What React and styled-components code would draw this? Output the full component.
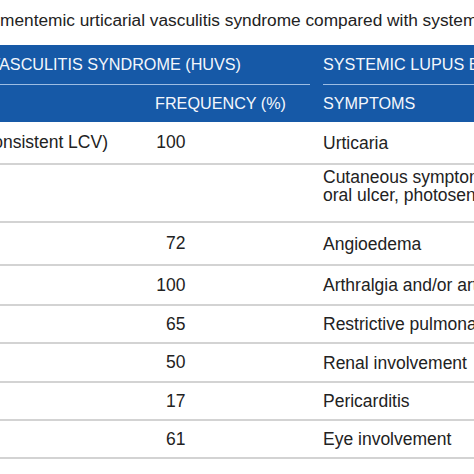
import React from "react";
import styled, { createGlobalStyle } from "styled-components";

const Global = createGlobalStyle`
  html, body { margin: 0; padding: 0; background: #ffffff; }
  body { font-family: "Liberation Sans", Arial, Helvetica, sans-serif; }
`;

const Page = styled.div`
  width: 474px;
  height: 474px;
  overflow: hidden;
  background: #ffffff;
  color: #222222;
`;

const Title = styled.div`
  height: 45px;
  box-sizing: border-box;
  padding-top: 9px;
  margin-left: -96px;
  font-size: 17.3px;
  line-height: 22px;
  white-space: nowrap;
  color: #222222;
`;

const Table = styled.div`
  display: grid;
  grid-template-columns: 145px 165px 1fr;
  width: 474px;
`;

const HeadBand = styled.div`
  grid-column: 1 / -1;
  display: grid;
  grid-template-columns: subgrid;
  grid-template-rows: 40px 37px;
  background: #1659a7;
  color: #f4f7fc;
  font-size: 16.2px;
  white-space: nowrap;
`;

const GroupHead = styled.div`
  grid-column: ${(p) => p.$cols};
  display: flex;
  align-items: center;
  justify-content: ${(p) => (p.$clipLeft ? "flex-end" : "flex-start")};
  padding-right: ${(p) => p.$padRight || 0}px;
  margin-left: ${(p) => p.$inset || 0}px;
  border-bottom: 1.5px solid #9dbde3;
  overflow: visible;
`;

const SubHead = styled.div`
  grid-column: ${(p) => p.$col};
  display: flex;
  align-items: center;
  padding-left: ${(p) => p.$padLeft || 0}px;
`;

const Row = styled.div`
  grid-column: 1 / -1;
  display: grid;
  grid-template-columns: subgrid;
  height: ${(p) => p.$h}px;
  box-sizing: border-box;
  border-bottom: 2px solid #d3d3d3;
  font-size: 17.5px;
  white-space: nowrap;
`;

const SymptomA = styled.div`
  display: flex;
  align-items: center;
  justify-content: flex-end;
  padding-right: 37px;
`;

const FreqCell = styled.div`
  display: flex;
  align-items: center;
  padding-left: 11px;
`;

const Num = styled.span`
  display: inline-block;
  width: 29.5px;
  text-align: right;
`;

const SymptomC = styled.div`
  display: flex;
  flex-direction: column;
  justify-content: ${(p) => (p.$top ? "flex-start" : "center")};
  padding-left: 13px;
  padding-top: ${(p) => p.$padTop || 0}px;
  line-height: ${(p) => (p.$multi ? "18px" : "20px")};
  overflow: visible;
`;

const rows = [
  { h: 43, a: "Urticarial lesions (histologically consistent LCV)", f: "100", c: ["Urticaria"] },
  { h: 58, a: "", f: "", c: ["Cutaneous symptoms (malar rash, discoid rash,", "oral ulcer, photosensitivity)"], multi: true },
  { h: 43, a: "", f: "72", c: ["Angioedema"] },
  { h: 40, a: "", f: "100", c: ["Arthralgia and/or arthritis"] },
  { h: 38, a: "", f: "65", c: ["Restrictive pulmonary disease"] },
  { h: 39, a: "", f: "50", c: ["Renal involvement"] },
  { h: 38, a: "", f: "17", c: ["Pericarditis"] },
  { h: 38, a: "", f: "61", c: ["Eye involvement"] },
];

export default function App() {
  return (
    <>
      <Global />
      <Page>
        <Title>
          Hypocomplementemic urticarial vasculitis syndrome compared with systemic lupus erythematosus
        </Title>
        <Table>
          <HeadBand>
            <GroupHead $cols="1 / 3" $clipLeft $padRight={69}>
              HYPOCOMPLEMENTEMIC URTICARIAL VASCULITIS SYNDROME (HUVS)
            </GroupHead>
            <GroupHead $cols="3 / 4" $inset={13}>
              SYSTEMIC LUPUS ERYTHEMATOSUS (SLE)
            </GroupHead>
            <SubHead $col="1 / 2" />
            <SubHead $col="2 / 3" $padLeft={10}>FREQUENCY (%)</SubHead>
            <SubHead $col="3 / 4" $padLeft={13}>SYMPTOMS</SubHead>
          </HeadBand>
          {rows.map((r, i) => (
            <Row key={i} $h={r.h}>
              <SymptomA>{r.a}</SymptomA>
              <FreqCell>
                <Num>{r.f}</Num>
              </FreqCell>
              <SymptomC $multi={r.multi} $top={r.multi} $padTop={r.multi ? 3 : 0}>
                {r.c.map((line, j) => (
                  <span key={j}>{line}</span>
                ))}
              </SymptomC>
            </Row>
          ))}
        </Table>
      </Page>
    </>
  );
}
